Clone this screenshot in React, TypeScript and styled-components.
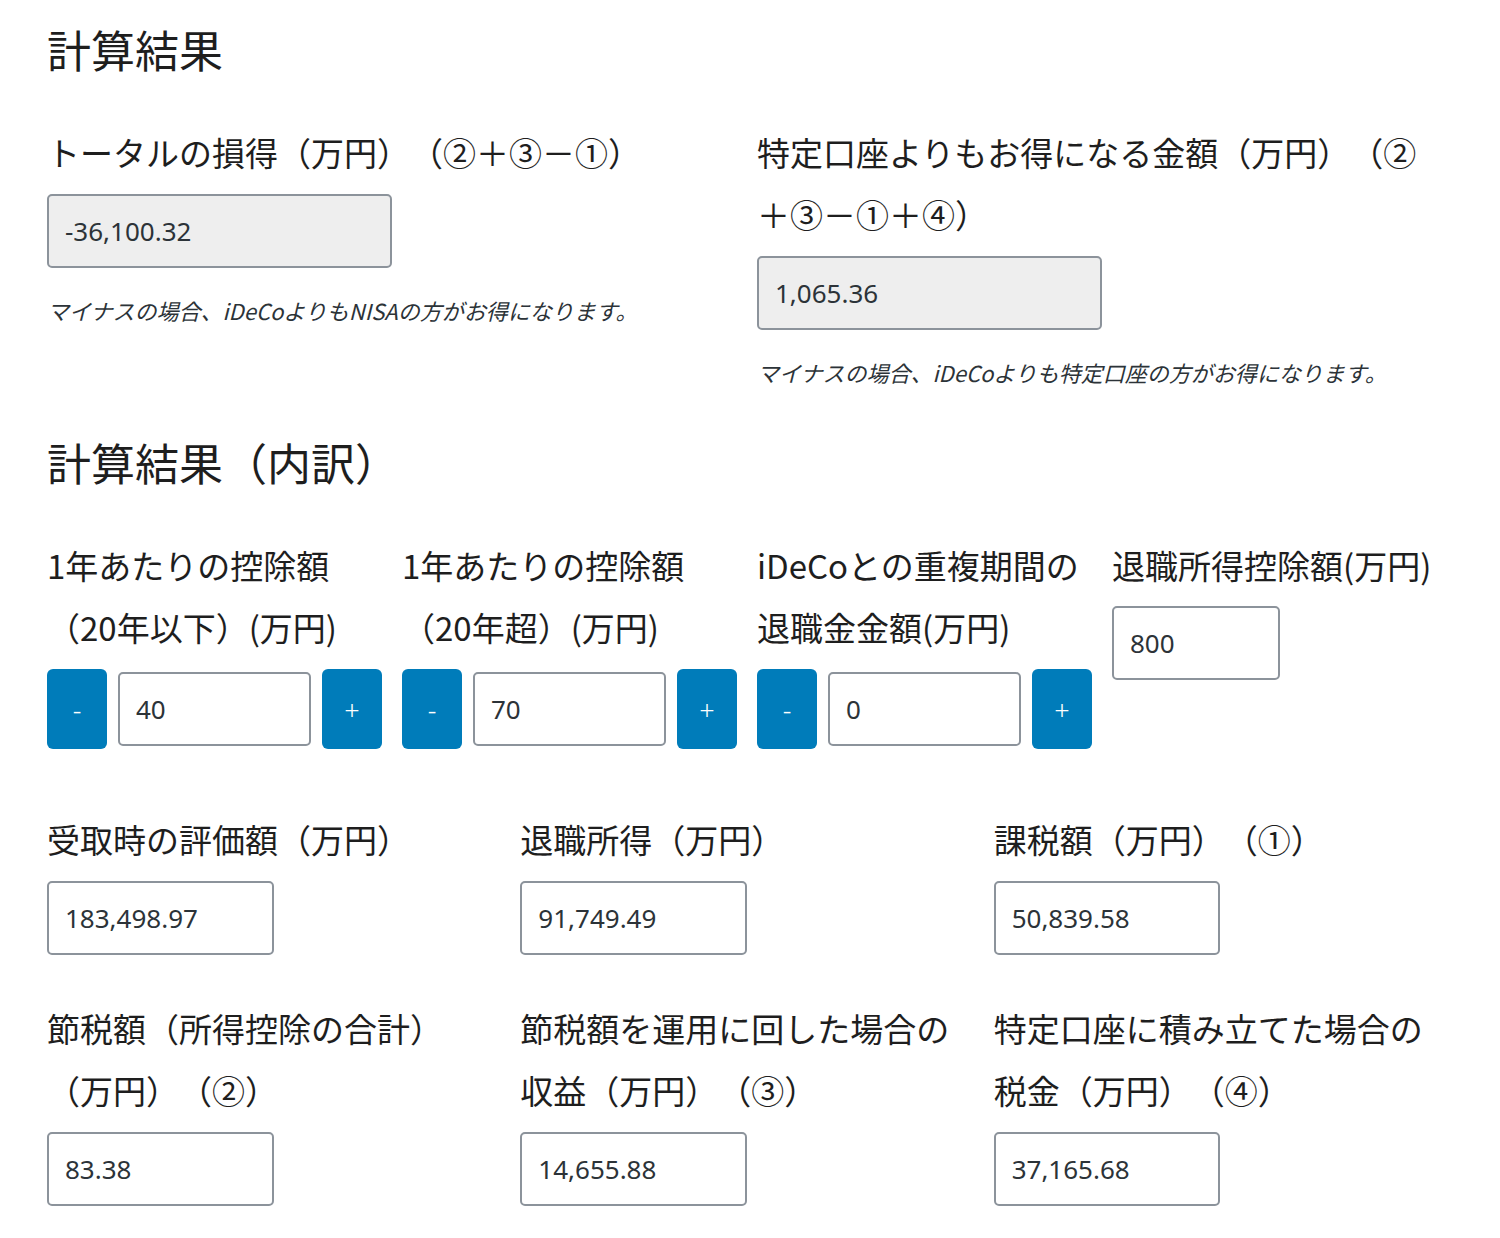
import React from "react";
import styled, { createGlobalStyle } from "styled-components";

const Global = createGlobalStyle`
  html, body { margin: 0; padding: 0; background: #fff; }
  body {
    font-family: "Noto Sans CJK JP", "Noto Sans", sans-serif;
    color: #1e1e1e;
  }
  * { box-sizing: border-box; }
`;

const Page = styled.div`
  width: 1500px;
  padding: 18px 0 40px 47px;
`;

const Container = styled.div`
  width: 1400px;
`;

const Heading = styled.h2<{ $top?: number }>`
  margin: ${(p) => p.$top ?? 0}px 0 0;
  font-size: 44px;
  line-height: 62px;
  font-weight: 400;
`;

const Grid = styled.div<{ $cols: number; $top: number }>`
  display: grid;
  grid-template-columns: repeat(${(p) => p.$cols}, 1fr);
  column-gap: 20px;
  row-gap: 42px;
  margin-top: ${(p) => p.$top}px;
  align-items: start;
`;

const Field = styled.div`
  display: flex;
  flex-direction: column;
  min-width: 0;
`;

const Label = styled.label<{ $gap?: number }>`
  font-size: 33px;
  line-height: 62px;
  margin-bottom: ${(p) => p.$gap ?? 11}px;
  text-spacing-trim: space-all;
`;

const ValueBox = styled.input<{ $readonly?: boolean }>`
  width: 50%;
  height: 74px;
  padding: 0 16px;
  border: 2px solid #8c939b;
  border-radius: 5px;
  background: ${(p) => (p.$readonly ? "#eeeeee" : "#ffffff")};
  font-family: "Noto Sans", "Noto Sans CJK JP", sans-serif;
  font-size: 26px;
  color: #2c3338;
  outline: none;
`;

const Note = styled.p`
  margin: 27px 0 0;
  font-size: 22px;
  line-height: 30px;
  font-style: italic;
  color: #2c3338;
`;

const Spin = styled.div`
  display: flex;
  align-items: center;
  gap: 11px;
`;

const SpinButton = styled.button`
  flex: 0 0 60px;
  height: 80px;
  border: none;
  border-radius: 6px;
  background: #007cba;
  color: #fff;
  font-family: "Noto Sans", sans-serif;
  font-size: 27px;
  font-weight: 300;
  padding: 0;
  cursor: pointer;
`;

const SpinInput = styled(ValueBox)`
  flex: 1 1 auto;
  min-width: 0;
`;

type Item = { label: string; value: string };

const steps: Item[] = [
  { label: "1年あたりの控除額（20年以下）(万円)", value: "40" },
  { label: "1年あたりの控除額（20年超）(万円)", value: "70" },
  { label: "iDeCoとの重複期間の退職金金額(万円)", value: "0" },
];

const results: Item[] = [
  { label: "受取時の評価額（万円）", value: "183,498.97" },
  { label: "退職所得（万円）", value: "91,749.49" },
  { label: "課税額（万円）（①）", value: "50,839.58" },
  { label: "節税額（所得控除の合計）（万円）（②）", value: "83.38" },
  { label: "節税額を運用に回した場合の収益（万円）（③）", value: "14,655.88" },
  { label: "特定口座に積み立てた場合の税金（万円）（④）", value: "37,165.68" },
];

export default function App() {
  return (
    <Page>
      <Global />
      <Container>
        <Heading>計算結果</Heading>
        <Grid $cols={2} $top={41}>
          <Field>
            <Label>トータルの損得（万円）（②＋③－①）</Label>
            <ValueBox $readonly readOnly value="-36,100.32" />
            <Note>マイナスの場合、iDeCoよりもNISAの方がお得になります。</Note>
          </Field>
          <Field>
            <Label>特定口座よりもお得になる金額（万円）（②＋③－①＋④）</Label>
            <ValueBox $readonly readOnly value="1,065.36" />
            <Note>マイナスの場合、iDeCoよりも特定口座の方がお得になります。</Note>
          </Field>
        </Grid>

        <Heading $top={44}>計算結果（内訳）</Heading>
        <Grid $cols={4} $top={41}>
          {steps.map((s) => (
            <Field key={s.label}>
              <Label>{s.label}</Label>
              <Spin>
                <SpinButton type="button">-</SpinButton>
                <SpinInput readOnly value={s.value} />
                <SpinButton type="button">+</SpinButton>
              </Spin>
            </Field>
          ))}
          <Field>
            <Label $gap={10}>退職所得控除額(万円)</Label>
            <ValueBox readOnly value="800" />
          </Field>
        </Grid>

        <Grid $cols={3} $top={59}>
          {results.map((r) => (
            <Field key={r.label}>
              <Label>{r.label}</Label>
              <ValueBox readOnly value={r.value} />
            </Field>
          ))}
        </Grid>
      </Container>
    </Page>
  );
}
